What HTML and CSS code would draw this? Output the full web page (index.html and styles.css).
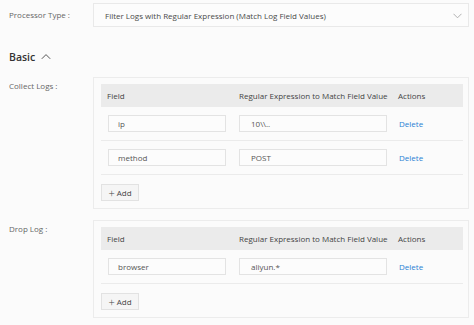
FILE: index.html
```html
<!DOCTYPE html>
<html>
<head>
<meta charset="utf-8">
<link rel="stylesheet" href="styles.css">
</head>
<body>
<div class="form">
  <div class="row first">
    <div class="label">Processor Type<span class="colon">:</span></div>
    <div class="control">
      <div class="select">
        <span>Filter Logs with Regular Expression (Match Log Field Values)</span>
        <svg class="chev" width="9" height="6" viewBox="0 0 9 6"><path d="M0.5 0.8 L4.5 4.8 L8.5 0.8" fill="none" stroke="#a8a8a8" stroke-width="0.9"/></svg>
      </div>
    </div>
  </div>

  <div class="section">Basic
    <svg class="caret" width="10" height="7" viewBox="0 0 10 7"><path d="M0.8 5.8 L5 1.6 L9.2 5.8" fill="none" stroke="#555" stroke-width="1"/></svg>
  </div>

  <div class="row">
    <div class="label lbl-card">Collect Logs<span class="colon">:</span></div>
    <div class="control">
      <div class="card">
        <div class="thead">
          <div class="c1">Field</div>
          <div class="c2">Regular Expression to Match Field Value</div>
          <div class="c3">Actions</div>
        </div>
        <div class="trow">
          <div class="c1"><div class="input w1">ip</div></div>
          <div class="c2"><div class="input w2">10\\..</div></div>
          <div class="c3"><span class="link">Delete</span></div>
        </div>
        <div class="trow">
          <div class="c1"><div class="input w1">method</div></div>
          <div class="c2"><div class="input w2">POST</div></div>
          <div class="c3"><span class="link">Delete</span></div>
        </div>
        <div class="add"><span class="plus">+</span>Add</div>
      </div>
    </div>
  </div>

  <div class="row second">
    <div class="label lbl-card">Drop Log<span class="colon">:</span></div>
    <div class="control">
      <div class="card">
        <div class="thead">
          <div class="c1">Field</div>
          <div class="c2">Regular Expression to Match Field Value</div>
          <div class="c3">Actions</div>
        </div>
        <div class="trow">
          <div class="c1"><div class="input w1">browser</div></div>
          <div class="c2"><div class="input w2">aliyun.*</div></div>
          <div class="c3"><span class="link">Delete</span></div>
        </div>
        <div class="add"><span class="plus">+</span>Add</div>
      </div>
    </div>
  </div>
</div>
</body>
</html>
```
FILE: styles.css
```css
html, body {
  margin: 0;
  padding: 0;
  background: #fbfbfb;
}
body {
  font-family: "Open Sans", "Noto Sans", sans-serif;
  font-size: 8px;
  color: #555;
  white-space: nowrap;
}
.form {
  padding: 3px 5px 0 9px;
}
.row {
  display: flex;
  align-items: flex-start;
}
.label {
  width: 84px;
  flex: none;
  color: #666;
  line-height: 24px;
}
.colon {
  margin-left: 2px;
}
.lbl-card {
  line-height: 18px;
}
.control {
  flex: 1;
  min-width: 0;
}
.select {
  height: 22px;
  border: 1px solid #e9e9e9;
  background: #fcfcfc;
  display: flex;
  align-items: center;
  justify-content: space-between;
  padding: 0 6px 0 11px;
  color: #4a4a4a;
}
.chev {
  margin-top: 1px;
}
.section {
  font-size: 10.5px;
  color: #333;
  font-weight: 600;
  margin: 22px 0 12px 0;
  height: 16px;
  line-height: 16px;
  display: flex;
  align-items: center;
  gap: 6px;
}
.caret {
  margin-top: -2px;
}
.row.second {
  margin-top: 11px;
}
.card {
  border: 1px solid #ececec;
  background: #fbfbfb;
  padding: 6px 5px 7px 7px;
}
.thead, .trow {
  display: grid;
  grid-template-columns: 131px 160px 1fr;
  align-items: center;
}
.thead {
  background: #ebebeb;
  height: 23px;
  color: #444;
}
.thead .c1 { padding-left: 6px; }
.thead .c2 { padding-left: 7px; }
.thead .c3 { padding-left: 6px; }
.trow {
  height: 33px;
  border-bottom: 1px solid #ebebeb;
}
.trow .c1 { padding-left: 7px; }
.trow .c2 { padding-left: 7px; }
.trow .c3 { padding-left: 7px; }
.input {
  height: 15px;
  border: 1px solid #e3e3e3;
  background: #fcfcfc;
  padding-left: 9px;
  line-height: 15px;
  color: #555;
}
.w1 { width: 107px; }
.w2 { width: 135px; padding-left: 11px; }
.link {
  color: #2a7fd4;
}
.add {
  margin-top: 9px;
  width: 36px;
  height: 15px;
  border: 1px solid #e2e2e2;
  background: #f5f5f5;
  display: flex;
  align-items: center;
  justify-content: center;
  gap: 2px;
  color: #444;
}
.plus {
  font-size: 11px;
  line-height: 11px;
  font-weight: 300;
  margin-top: -1px;
}
```
